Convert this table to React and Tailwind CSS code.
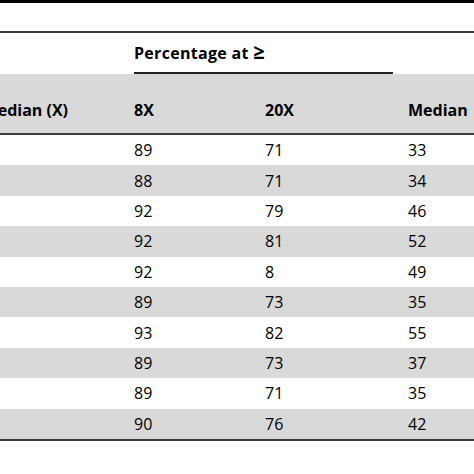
import React from 'react';

const rows = [
  ['89', '71', '33'],
  ['88', '71', '34'],
  ['92', '79', '46'],
  ['92', '81', '52'],
  ['92', '8', '49'],
  ['89', '73', '35'],
  ['93', '82', '55'],
  ['89', '73', '37'],
  ['89', '71', '35'],
  ['90', '76', '42'],
];

const font = { fontFamily: '"Open Sans", "Liberation Sans", sans-serif' };

const App = () => {
  return (
    <div className="w-[474px] h-[474px] overflow-hidden bg-white text-black text-[16px] leading-[20px]" style={font}>
      {/* top rule */}
      <div className="h-[3px] bg-black" />
      <div className="h-[28px]" />
      <div className="h-[2px] bg-[#3c3c3c]" />

      {/* spanning header */}
      <div className="grid grid-cols-[134px_259px_1fr] h-[41px]">
        <div />
        <div className="flex flex-col justify-between pt-[9px]">
          <span className="font-bold whitespace-nowrap tracking-[0.3px]">
            Percentage at <span className="text-[20px] leading-[20px]">≥</span>
          </span>
          <div className="h-[2px] bg-[#222]" />
        </div>
        <div />
      </div>

      {/* column header */}
      <div className="grid grid-cols-[134px_131px_143px_1fr] h-[59px] bg-[#d9d9d9] pt-[26px] font-bold">
        <div className="flex justify-end pr-[66px] whitespace-nowrap">Median (X)</div>
        <div>8X</div>
        <div>20X</div>
        <div className="whitespace-nowrap">Median</div>
      </div>
      <div className="h-[2px] bg-[#3c3c3c]" />

      {/* body */}
      {rows.map((r, i) => (
        <div
          key={i}
          className={`grid grid-cols-[134px_131px_143px_1fr] h-[30.4px] items-center ${i % 2 === 1 ? 'bg-[#d9d9d9]' : 'bg-white'}`}
        >
          <div />
          <div>{r[0]}</div>
          <div>{r[1]}</div>
          <div>{r[2]}</div>
        </div>
      ))}
      <div className="h-[2px] bg-[#3c3c3c]" />
    </div>
  );
};

export default App;
